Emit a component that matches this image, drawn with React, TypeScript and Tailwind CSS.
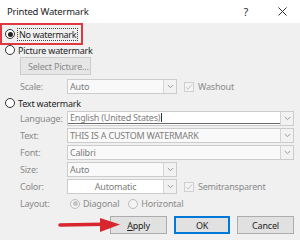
import React from "react";

const Radio = ({ checked, disabled }: { checked?: boolean; disabled?: boolean }) => (
  <span
    className={`flex items-center justify-center w-[10px] h-[10px] rounded-full border shrink-0 ${
      disabled ? "border-[#bcbcbc] bg-[#f4f4f4]" : "border-[#333] bg-white"
    }`}
  >
    {checked && (
      <span className={`w-[5px] h-[5px] rounded-full ${disabled ? "bg-[#c4c4c4]" : "bg-[#222]"}`} />
    )}
  </span>
);

const Check = ({ label }: { label: string }) => (
  <div className="flex items-center gap-[4px]">
    <span className="flex items-center justify-center w-[10px] h-[10px] border border-[#cfcfcf] bg-[#f4f4f4]">
      <svg width="8" height="8" viewBox="0 0 8 8">
        <path d="M1 4.2 L3 6.2 L7 1.5" fill="none" stroke="#c2c2c2" strokeWidth="1" />
      </svg>
    </span>
    <span className="text-[#8a8a8a]">{label}</span>
  </div>
);

const Combo = ({
  value,
  width,
  center,
  white,
  underline,
}: {
  value: string;
  width: string;
  center?: boolean;
  white?: boolean;
  underline?: boolean;
}) => (
  <div
    className={`flex h-[15px] border border-[#cccccc] ${white ? "bg-white" : "bg-[#f9f9f9]"} ${width}`}
  >
    <div
      className={`flex-1 flex items-center px-[2px] text-[#7d7d7d] overflow-hidden ${
        center ? "justify-center" : ""
      } ${underline ? "border-b border-[#6b6b6b] mb-[1px]" : ""}`}
    >
      {value}
      {underline && <span className="ml-[1px] w-px h-[9px] bg-[#333]" />}
    </div>
    <div className="flex items-center justify-center w-[13px] border-l border-[#d4d4d4] bg-[#f2f2f2]">
      <svg width="7" height="5" viewBox="0 0 7 5">
        <path d="M0.8 1 L3.5 3.7 L6.2 1" fill="none" stroke="#9a9a9a" strokeWidth="1" />
      </svg>
    </div>
  </div>
);

const Row = ({ label, children }: { label: string; children: React.ReactNode }) => (
  <div className="flex items-center h-[15px]">
    <span className="w-[47px] text-[#8a8a8a]">{label}</span>
    {children}
  </div>
);

const App = () => {
  return (
    <div
      className="relative w-[300px] h-[240px] overflow-hidden bg-[#f0f0f0] text-[9px] leading-none tracking-[-0.2px] whitespace-nowrap text-[#1e1e1e]"
      style={{ fontFamily: "'Noto Sans', 'Open Sans', sans-serif" }}
    >
      <div className="flex items-center h-[23px] bg-white pl-[7px] pr-[13px]">
        <span className="flex-1 text-[#222] text-[9.5px]">Printed Watermark</span>
        <span className="text-[11px] text-[#333] mr-[30px]">?</span>
        <svg width="9" height="9" viewBox="0 0 9 9">
          <path d="M0.5 0.5 L8.5 8.5 M8.5 0.5 L0.5 8.5" stroke="#333" strokeWidth="1" />
        </svg>
      </div>

      <div className="flex flex-col pl-[5px] pr-[6px]">
        <div className="flex items-center -ml-[5px] w-[83px] h-[22px] border-2 border-[#e0383f] pl-[3px]">
          <Radio checked />
          <span className="ml-[2px] px-[1px] py-[1px] border border-dotted border-[#444] tracking-[-0.3px]">
            No watermark
          </span>
        </div>

        <div className="flex items-center h-[10px]">
          <Radio />
          <span className="ml-[3px]">Picture watermark</span>
        </div>

        <div className="flex items-center ml-[15px] mt-[2px] w-[71px] h-[18px] border border-[#cccccc] bg-[#e6e6e6] text-[#8a8a8a] pl-[7px]">
          Select Picture...
        </div>

        <div className="flex items-center mt-[4px] pl-[15px]">
          <Row label="Scale:">
            <Combo value="Auto" width="w-[110px]" />
          </Row>
          <div className="ml-[7px]">
            <Check label="Washout" />
          </div>
        </div>

        <div className="flex items-center h-[10px] mt-[4px]">
          <Radio />
          <span className="ml-[3px]">Text watermark</span>
        </div>

        <div className="flex flex-col gap-[2px] mt-[3px] pl-[15px]">
          <Row label="Language:">
            <Combo value="English (United States)" width="w-[227px]" underline white />
          </Row>
          <Row label="Text:">
            <Combo value="THIS IS A CUSTOM WATERMARK" width="w-[227px]" />
          </Row>
          <Row label="Font:">
            <Combo value="Calibri" width="w-[227px]" />
          </Row>
          <Row label="Size:">
            <Combo value="Auto" width="w-[110px]" />
          </Row>
          <div className="flex items-center">
            <Row label="Color:">
              <Combo value="Automatic" width="w-[110px]" center white />
            </Row>
            <div className="ml-[7px]">
              <Check label="Semitransparent" />
            </div>
          </div>
          <Row label="Layout:">
            <div className="flex items-center gap-[3px] ml-[3px]">
              <Radio checked disabled />
              <span className="text-[#8a8a8a]">Diagonal</span>
              <span className="ml-[6px]">
                <Radio disabled />
              </span>
              <span className="text-[#8a8a8a]">Horizontal</span>
            </div>
          </Row>
        </div>

        <div className="flex justify-end gap-[7px] mt-[5px]">
          <div className="flex items-center justify-center w-[57px] h-[18px] border border-[#adadad] bg-[#e1e1e1]">
            <span className="underline">A</span>pply
          </div>
          <div className="flex items-center justify-center w-[56px] h-[18px] border-2 border-[#0078d7] bg-[#e1e1e1]">
            OK
          </div>
          <div className="flex items-center justify-center w-[57px] h-[18px] border border-[#adadad] bg-[#e1e1e1]">
            Cancel
          </div>
        </div>
      </div>

      <svg className="absolute left-[58px] top-[217px]" width="64" height="16" viewBox="0 0 64 16">
        <path d="M2 8 L46 7.3" stroke="#d8262e" strokeWidth="3.5" strokeLinecap="round" />
        <path d="M42 1 L62 7.5 L42 15 Z" fill="#d8262e" />
      </svg>
    </div>
  );
};

export default App;
